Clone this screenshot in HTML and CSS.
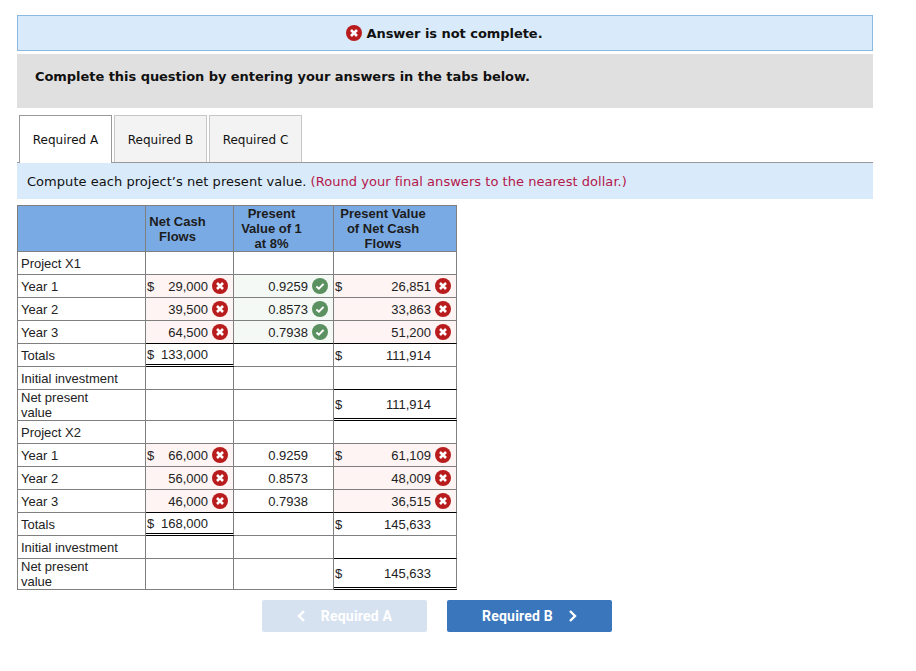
FILE: index.html
```html
<!DOCTYPE html>
<html lang="en">
<head>
<meta charset="utf-8">
<title>Required A</title>
<link rel="stylesheet" href="styles.css">
</head>
<body>
<svg class="defs" width="0" height="0" aria-hidden="true">
  <symbol id="x" viewBox="0 0 16 16"><circle cx="8" cy="8" r="8" fill="#b81c1c"/><path d="M5 5l6 6M11 5l-6 6" stroke="#fff" stroke-width="2.6" fill="none"/></symbol>
  <symbol id="ok" viewBox="0 0 16 16"><circle cx="8" cy="8" r="8" fill="#5b9160"/><path d="M4.4 8.4l2.5 2.3 4.7-4.8" stroke="#fff" stroke-width="2" fill="none"/></symbol>
</svg>
<main class="page">
  <div class="alert"><svg class="icon"><use href="#x"/></svg><strong>Answer is not complete.</strong></div>
  <div class="lead"><strong>Complete this question by entering your answers in the tabs below.</strong></div>
  <div class="tabs">
    <div class="tab active">Required A</div>
    <div class="tab">Required B</div>
    <div class="tab">Required C</div>
  </div>
  <p class="prompt">Compute each project’s net present value. <span class="hint">(Round your final answers to the nearest dollar.)</span></p>
  <table class="sheet">
    <colgroup><col class="c1"><col class="c2"><col class="c3"><col class="c4"></colgroup>
    <thead>
      <tr><th></th><th>Net Cash<br>Flows</th><th>Present<br>Value of 1<br>at 8%</th><th>Present Value<br>of Net Cash<br>Flows</th></tr>
    </thead>
    <tbody>
      <tr><td class="lbl">Project X1</td><td></td><td></td><td></td></tr>
      <tr><td class="lbl">Year 1</td><td class="bad"><div class="v"><span class="cur">$</span><span class="num">29,000</span><svg class="icon"><use href="#x"/></svg></div></td><td class="good"><div class="v"><span class="num">0.9259</span><svg class="icon"><use href="#ok"/></svg></div></td><td class="bad"><div class="v"><span class="cur">$</span><span class="num">26,851</span><svg class="icon"><use href="#x"/></svg></div></td></tr>
      <tr><td class="lbl">Year 2</td><td class="bad"><div class="v"><span class="num">39,500</span><svg class="icon"><use href="#x"/></svg></div></td><td class="good"><div class="v"><span class="num">0.8573</span><svg class="icon"><use href="#ok"/></svg></div></td><td class="bad"><div class="v"><span class="num">33,863</span><svg class="icon"><use href="#x"/></svg></div></td></tr>
      <tr><td class="lbl">Year 3</td><td class="bad top"><div class="v"><span class="num">64,500</span><svg class="icon"><use href="#x"/></svg></div></td><td class="good top"><div class="v"><span class="num">0.7938</span><svg class="icon"><use href="#ok"/></svg></div></td><td class="bad top"><div class="v"><span class="num">51,200</span><svg class="icon"><use href="#x"/></svg></div></td></tr>
      <tr><td class="lbl">Totals</td><td class="dbl"><div class="v"><span class="cur">$</span><span class="num">133,000</span><i class="gap"></i></div></td><td></td><td><div class="v"><span class="cur">$</span><span class="num">111,914</span><i class="gap"></i></div></td></tr>
      <tr><td class="lbl">Initial investment</td><td></td><td></td><td class="top"></td></tr>
      <tr class="tall"><td class="lbl">Net present<br>value</td><td></td><td></td><td class="dbl"><div class="v"><span class="cur">$</span><span class="num">111,914</span><i class="gap"></i></div></td></tr>
      <tr><td class="lbl">Project X2</td><td></td><td></td><td></td></tr>
      <tr><td class="lbl">Year 1</td><td class="bad"><div class="v"><span class="cur">$</span><span class="num">66,000</span><svg class="icon"><use href="#x"/></svg></div></td><td><div class="v"><span class="num">0.9259</span><i class="gap"></i></div></td><td class="bad"><div class="v"><span class="cur">$</span><span class="num">61,109</span><svg class="icon"><use href="#x"/></svg></div></td></tr>
      <tr><td class="lbl">Year 2</td><td class="bad"><div class="v"><span class="num">56,000</span><svg class="icon"><use href="#x"/></svg></div></td><td><div class="v"><span class="num">0.8573</span><i class="gap"></i></div></td><td class="bad"><div class="v"><span class="num">48,009</span><svg class="icon"><use href="#x"/></svg></div></td></tr>
      <tr><td class="lbl">Year 3</td><td class="bad top"><div class="v"><span class="num">46,000</span><svg class="icon"><use href="#x"/></svg></div></td><td class="top"><div class="v"><span class="num">0.7938</span><i class="gap"></i></div></td><td class="bad top"><div class="v"><span class="num">36,515</span><svg class="icon"><use href="#x"/></svg></div></td></tr>
      <tr><td class="lbl">Totals</td><td class="dbl"><div class="v"><span class="cur">$</span><span class="num">168,000</span><i class="gap"></i></div></td><td></td><td><div class="v"><span class="cur">$</span><span class="num">145,633</span><i class="gap"></i></div></td></tr>
      <tr><td class="lbl">Initial investment</td><td></td><td></td><td class="top"></td></tr>
      <tr class="tall"><td class="lbl">Net present<br>value</td><td></td><td></td><td class="dbl"><div class="v"><span class="cur">$</span><span class="num">145,633</span><i class="gap"></i></div></td></tr>
    </tbody>
  </table>
  <nav class="pager">
    <div class="btn off"><svg class="chev" viewBox="0 0 9 14"><path d="M7 2L2 7l5 5" stroke="#fff" stroke-width="2.4" fill="none"/></svg>Required A</div>
    <div class="btn on">Required B<svg class="chev" viewBox="0 0 9 14"><path d="M2 2l5 5-5 5" stroke="#fff" stroke-width="2.4" fill="none"/></svg></div>
  </nav>
</main>
</body>
</html>
```
FILE: styles.css
```css
* { box-sizing: border-box; }
html, body { margin: 0; padding: 0; background: #fff; }
.defs { position: absolute; }
.page {
  width: 890px;
  padding: 15px 17px 0;
  font-family: "DejaVu Sans", Verdana, sans-serif;
  font-size: 13px;
  color: #111;
}
.alert {
  height: 36px;
  display: flex;
  align-items: center;
  justify-content: center;
  gap: 4px;
  padding-right: 1px;
  background: #d9ebfa;
  border: 1px solid #8db8e0;
  font-size: 13px;
  letter-spacing: -0.05px;
}
.alert .icon { width: 16px; height: 16px; }
.lead {
  height: 54px;
  margin-top: 3px;
  padding: 14px 18px 0;
  background: #e0e0e0;
  line-height: 17px;
  letter-spacing: -0.05px;
}
.tabs {
  display: flex;
  gap: 2px;
  height: 48px;
  margin-top: 7px;
  padding-left: 2px;
  border-bottom: 1px solid #999;
}
.tab {
  width: 93px;
  height: 47px;
  line-height: 48px;
  text-align: center;
  font-size: 12px;
  background: #f3f3f3;
  border: 1px solid #c6c6c6;
  border-bottom: 0;
}
.tab.active {
  height: 48px;
  background: #fff;
  border: 1px solid #999;
  border-bottom: 0;
  position: relative;
  z-index: 1;
}
.prompt {
  height: 36px;
  margin: 0;
  padding: 0 10px;
  line-height: 38px;
  background: #d9ebfa;
  letter-spacing: 0.04px;
}
.hint { color: #b5174a; }
.sheet {
  width: 440px;
  margin-top: 6px;
  table-layout: fixed;
  border-collapse: separate;
  border-spacing: 0;
  border-top: 1px solid #7f7f7f;
  border-left: 1px solid #7f7f7f;
  font-family: "Liberation Sans", Arial, sans-serif;
  font-size: 13px;
  line-height: 15px;
  color: #222;
}
.c1 { width: 128px; }
.c2 { width: 88px; }
.c3 { width: 100px; }
.c4 { width: 123px; }
.sheet th, .sheet td {
  padding: 0;
  border-right: 1px solid #7f7f7f;
  border-bottom: 1px solid #7f7f7f;
  height: 23px;
}
.sheet th {
  height: 45px;
  padding-right: 24px;
  background: #7aaae3;
  font-weight: 700;
  text-align: center;
  color: #1c1c1c;
}
.tall td { height: 31px; }
.sheet .lbl { padding-left: 3px; }
.sheet .bad { background: #fdf4f3; }
.sheet .good { background: #f5f9f5; }
.sheet .top { border-bottom-color: #000; }
.sheet .dbl { border-bottom: 3px double #000; }
.v {
  display: flex;
  align-items: center;
  padding: 0 5px 0 1px;
}
.cur { width: 10px; }
.num { margin-left: auto; }
.v .icon { width: 16px; height: 16px; margin-left: 4px; flex: none; }
.gap { width: 20px; flex: none; }
.pager {
  display: flex;
  gap: 20px;
  margin-top: 10px;
  padding-left: 245px;
}
.btn {
  width: 165px;
  height: 32px;
  display: flex;
  align-items: center;
  justify-content: center;
  gap: 15px;
  border-radius: 2px;
  font-family: Roboto, sans-serif;
  font-weight: 700;
  font-size: 14px;
  letter-spacing: 0.2px;
  color: #fff;
}
.btn.off { background: #d7e2f1; }
.btn.on { background: #3a76bb; }
.chev { width: 9px; height: 14px; }
```
